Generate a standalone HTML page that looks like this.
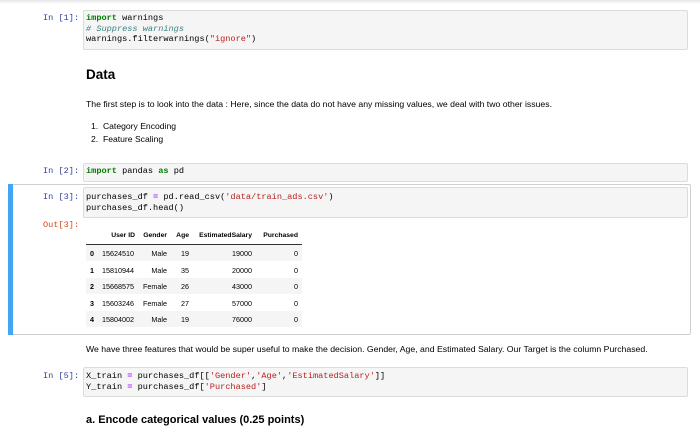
<!DOCTYPE html>
<html><head><meta charset="utf-8"><style>
body{margin:0;width:700px;height:432px;background:#fff;position:relative;overflow:hidden;font-family:"Liberation Sans",sans-serif;color:#000}
.a{position:absolute;white-space:pre}
.m{font-family:"Liberation Mono",monospace;font-size:8.6px;line-height:10.5px}
.lbl{color:#303f9f}
.out{color:#d84315}
.box{position:absolute;background:#f5f5f5;border:1px solid #dcdcdc;border-radius:2px;left:83px;width:603px}
.k{color:#008000;font-weight:bold}
.s{color:#ba2121}
.c{color:#408080;font-style:italic}
.o{color:#aa22ff;font-weight:bold}
.t{font-size:7.2px;position:absolute}
.h{font-size:6.8px}
</style></head><body>
<div style="position:absolute;left:0;top:0;width:700px;height:4px;background:linear-gradient(#e6e6e6,#fff)"></div>

<div class="box" style="top:10px;height:38px"></div>
<div class="a m lbl" style="left:43px;top:13px">In [1]:</div>
<div class="a m" style="left:86px;top:13px"><span class="k">import</span> warnings
<span class="c"># Suppress warnings</span>
warnings.filterwarnings(<span class="s">"ignore"</span>)</div>

<div class="a" style="left:86px;top:67px;font-size:13.5px;font-weight:bold">Data</div>
<div class="a" style="left:86px;top:99px;font-size:8.7px">The first step is to look into the data : Here, since the data do not have any missing values, we deal with two other issues.</div>
<div class="a" style="left:91px;top:120px;font-size:8.6px;line-height:13px">1.  Category Encoding
2.  Feature Scaling</div>

<div class="box" style="top:163px;height:17px"></div>
<div class="a m lbl" style="left:43px;top:166px">In [2]:</div>
<div class="a m" style="left:86px;top:166px"><span class="k">import</span> pandas <span class="k">as</span> pd</div>

<div style="position:absolute;left:8px;top:184px;width:681px;height:149px;border:1px solid #cfcfcf;border-radius:2px"></div>
<div style="position:absolute;left:8px;top:184px;width:5px;height:151px;background:#42a5f5"></div>
<div class="box" style="top:187px;height:29px"></div>
<div class="a m lbl" style="left:43px;top:192px">In [3]:</div>
<div class="a m" style="left:86px;top:192px">purchases_df <span class="o">=</span> pd.read_csv(<span class="s">'data/train_ads.csv'</span>)
purchases_df.head()</div>
<div class="a m out" style="left:43px;top:220px">Out[3]:</div>

<div style="position:absolute;left:86px;top:244px;width:216px;height:1px;background:#333"></div>
<div style="position:absolute;left:86px;top:245px;width:216px;height:16px;background:#f5f5f5"></div>
<div style="position:absolute;left:86px;top:278px;width:216px;height:16px;background:#f5f5f5"></div>
<div style="position:absolute;left:86px;top:311px;width:216px;height:16px;background:#f5f5f5"></div>
<div class="t" style="left:86px;top:232px;width:216px;font-weight:bold">
<span class="t h" style="right:167px">User ID</span><span class="t h" style="right:135px">Gender</span><span class="t h" style="right:113px">Age</span><span class="t h" style="right:50px">EstimatedSalary</span><span class="t h" style="right:4px">Purchased</span></div>
<div class="t" style="left:86px;top:249px;width:216px"><b class="t" style="left:4px">0</b><span class="t" style="left:16px">15624510</span><span class="t" style="right:135px">Male</span><span class="t" style="left:95px">19</span><span class="t" style="right:50px">19000</span><span class="t" style="right:4px">0</span></div>
<div class="t" style="left:86px;top:265.5px;width:216px"><b class="t" style="left:4px">1</b><span class="t" style="left:16px">15810944</span><span class="t" style="right:135px">Male</span><span class="t" style="left:95px">35</span><span class="t" style="right:50px">20000</span><span class="t" style="right:4px">0</span></div>
<div class="t" style="left:86px;top:282px;width:216px"><b class="t" style="left:4px">2</b><span class="t" style="left:16px">15668575</span><span class="t" style="right:135px">Female</span><span class="t" style="left:95px">26</span><span class="t" style="right:50px">43000</span><span class="t" style="right:4px">0</span></div>
<div class="t" style="left:86px;top:298.5px;width:216px"><b class="t" style="left:4px">3</b><span class="t" style="left:16px">15603246</span><span class="t" style="right:135px">Female</span><span class="t" style="left:95px">27</span><span class="t" style="right:50px">57000</span><span class="t" style="right:4px">0</span></div>
<div class="t" style="left:86px;top:315px;width:216px"><b class="t" style="left:4px">4</b><span class="t" style="left:16px">15804002</span><span class="t" style="right:135px">Male</span><span class="t" style="left:95px">19</span><span class="t" style="right:50px">76000</span><span class="t" style="right:4px">0</span></div>

<div class="a" style="left:86px;top:344px;font-size:8.7px">We have three features that would be super useful to make the decision. Gender, Age, and Estimated Salary. Our Target is the column Purchased.</div>

<div class="box" style="top:367px;height:28px"></div>
<div class="a m lbl" style="left:43px;top:371px">In [5]:</div>
<div class="a m" style="left:86px;top:371px">X_train <span class="o">=</span> purchases_df[[<span class="s">'Gender'</span>,<span class="s">'Age'</span>,<span class="s">'EstimatedSalary'</span>]]
Y_train <span class="o">=</span> purchases_df[<span class="s">'Purchased'</span>]</div>

<div class="a" style="left:86px;top:414px;font-size:11px;font-weight:bold">a. Encode categorical values (0.25 points)</div>
</body></html>
